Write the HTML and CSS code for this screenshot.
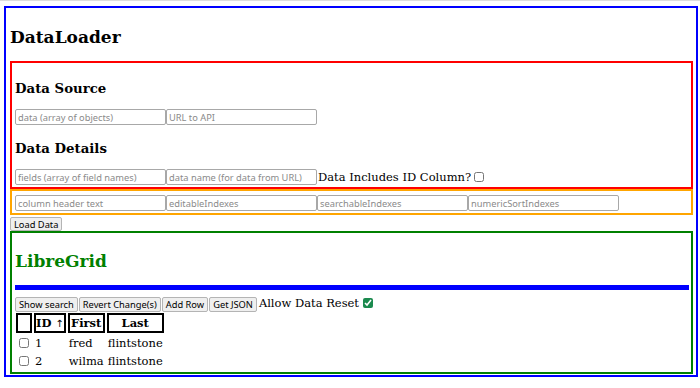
FILE: index.html
```html
<html>
<head>
	<title>DataLoader</title>
<link rel="stylesheet" href="styles.css">
</head>
<body>
<div class="loader">
	<h2 class="title">DataLoader</h2>

	<div class="box source">
		<h3>Data Source</h3>
		<div class="row">
			<input class="field" placeholder="data (array of objects)">
			<input class="field" placeholder="URL to API">
		</div>
		<h3>Data Details</h3>
		<div class="row">
			<input class="field" placeholder="fields (array of field names)">
			<input class="field" placeholder="data name (for data from URL)">
			<label class="lbl">Data Includes ID Column?</label>
			<input class="check" type="checkbox">
		</div>
	</div>

	<div class="box options">
		<div class="row">
			<input class="field" placeholder="column header text">
			<input class="field" placeholder="editableIndexes">
			<input class="field" placeholder="searchableIndexes">
			<input class="field" placeholder="numericSortIndexes">
		</div>
	</div>

	<div class="row"><button class="btn load">Load Data</button></div>

	<div class="box grid">
		<h2 class="grid-title">LibreGrid</h2>
		<div class="bar"></div>
		<div class="row tools">
			<button class="btn">Show search</button>
			<button class="btn">Revert Change(s)</button>
			<button class="btn">Add Row</button>
			<button class="btn">Get JSON</button>
			<label class="lbl">Allow Data Reset</label>
			<input class="check" type="checkbox" checked>
		</div>
		<table class="lg">
			<tr><th class="sel"></th><th class="sorted">ID <span class="arrow">&#8593;</span></th><th>First</th><th>Last</th></tr>
			<tr><td><input class="check" type="checkbox"></td><td>1</td><td>fred</td><td>flintstone</td></tr>
			<tr><td><input class="check" type="checkbox"></td><td>2</td><td>wilma</td><td>flintstone</td></tr>
		</table>
	</div>
</div>
</body>
</html>
```

FILE: styles.css
```css
HTML {border-top: 1px solid #dddddd;}
BODY {margin: 5px 2px 10px 4px; color: black; background-color: white; font-family: "DejaVu Serif", serif; font-size: 11.5px;}
.loader {border: 2px solid blue; padding: 5px 3px 1px 4px;}
.title {font-size: 17px; margin: 14px 0;}
.box {border: 2px solid red; padding: 4px 3px 0 3px;}
.box h3 {font-size: 13.3px; margin: 13.5px 0;}
.source .row {padding-bottom: 2px;}
.options {border-color: orange; padding: 4px 3px 2px 3px;}
.grid {border-color: green; padding: 4px 2px 1px 3px;}
.grid-title {color: green; font-size: 17px; margin: 14px 0;}
.bar {height: 4.5px; background-color: blue; margin-bottom: 5px;}
.row {display: flex; align-items: center;}
.tools {gap: 1px;}
.field {width: 151px; height: 16px; box-sizing: border-box; margin: 0; padding: 0 2px; border: 1px solid #a8a8a8; border-radius: 2px; font-family: "Noto Sans", sans-serif; font-size: 9.3px; color: black; background: white;}
.field::placeholder {color: #8a8a8a;}
.lbl {margin-left: 1px;}
.check {width: 10px; height: 10px; margin: 0 3px; accent-color: #1b8a4e;}
.btn {margin: 2px 0 0 0; padding: 0 3px; height: 15px; font-family: "Noto Sans", sans-serif; font-size: 9.3px; color: black; background: #efefef; border: 1px solid #b4b4b4; border-radius: 2px;}
.load {height: 14px; margin-bottom: 0;}
.lg {border-spacing: 2px; margin-left: -1px; margin-top: -1px; font-size: 11.5px; line-height: normal;}
.lg th {border: 2px solid black; padding: 1px; font-size: 11.5px;}
.lg th.sorted {padding: 1px 0;}
.lg .arrow {font-family: "DejaVu Sans", sans-serif; font-weight: normal; font-size: 10px; color: black;}
.lg td {padding: 1px;}
.lg td .check {margin: 0 2px; vertical-align: -1px;}
```
